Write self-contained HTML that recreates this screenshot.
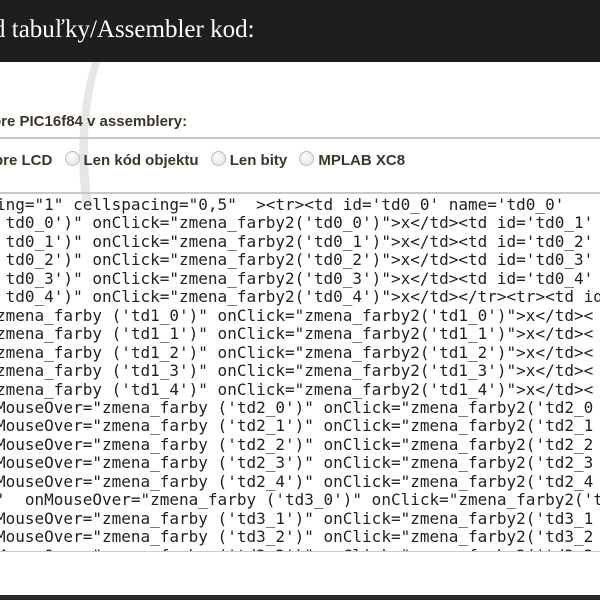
<!DOCTYPE html>
<html><head><meta charset="utf-8"><style>
html,body{margin:0;padding:0;width:600px;height:600px;overflow:hidden;background:#fff;position:relative}
.hdr{position:absolute;left:0;top:0;width:600px;height:62px;background:#1e1e1e}
.hdr span{position:absolute;left:-7px;top:16px;font:25px "Liberation Serif",serif;color:#fff;white-space:nowrap}
.lbl{position:absolute;left:-8px;top:113px;font:bold 15px "Liberation Sans",sans-serif;color:#3d3528;white-space:nowrap}
.hr1{position:absolute;left:0;top:137px;width:600px;height:2px;background:#c8c8c8}
.radios{position:absolute;left:-6px;top:151px;font:bold 15px "Liberation Sans",sans-serif;color:#3d3528;white-space:nowrap}
.r{display:inline-block;width:13px;height:13px;border-radius:50%;border:1px solid #bbb;background:radial-gradient(circle at 40% 35%,#fff,#ddd);vertical-align:-1px;margin:0 4px 0 8px}
.hr2{position:absolute;left:0;top:192px;width:600px;height:2px;background:#c8c8c8}
.code{position:absolute;left:0;top:195px;width:600px;height:356px;overflow:hidden;border-bottom:1px solid #ccc}
pre{position:absolute;left:-4px;top:1px;margin:0;font:16px "DejaVu Sans Mono",monospace;line-height:18.45px;color:#222;white-space:pre}
.foot{position:absolute;left:0;top:595px;width:600px;height:5px;background:#2a2a2a}
</style></head><body>
<svg style="position:absolute;left:0;top:62px" width="200" height="140"><path d="M100 0 C88 40 84 90 92 140 L82 140 C76 90 80 40 92 0 Z" fill="#e6e6e6"/></svg>
<div class="hdr"><span>d tabuľky/Assembler kod:</span></div>
<div class="lbl">pre PIC16f84 v assemblery:</div>
<div class="hr1"></div>
<div class="radios">pre LCD <span class="r"></span>Len kód objektu <span class="r"></span>Len bity <span class="r"></span>MPLAB XC8</div>
<div class="hr2"></div>
<div class="code"><pre>ing="1" cellspacing="0,5"  &gt;&lt;tr&gt;&lt;td id='td0_0' name='td0_0'
 td0_0')" onClick="zmena_farby2('td0_0')"&gt;x&lt;/td&gt;&lt;td id='td0_1'
 td0_1')" onClick="zmena_farby2('td0_1')"&gt;x&lt;/td&gt;&lt;td id='td0_2'
 td0_2')" onClick="zmena_farby2('td0_2')"&gt;x&lt;/td&gt;&lt;td id='td0_3'
 td0_3')" onClick="zmena_farby2('td0_3')"&gt;x&lt;/td&gt;&lt;td id='td0_4'
 td0_4')" onClick="zmena_farby2('td0_4')"&gt;x&lt;/td&gt;&lt;/tr&gt;&lt;tr&gt;&lt;td id
zmena_farby ('td1_0')" onClick="zmena_farby2('td1_0')"&gt;x&lt;/td&gt;&lt;
zmena_farby ('td1_1')" onClick="zmena_farby2('td1_1')"&gt;x&lt;/td&gt;&lt;
zmena_farby ('td1_2')" onClick="zmena_farby2('td1_2')"&gt;x&lt;/td&gt;&lt;
zmena_farby ('td1_3')" onClick="zmena_farby2('td1_3')"&gt;x&lt;/td&gt;&lt;
zmena_farby ('td1_4')" onClick="zmena_farby2('td1_4')"&gt;x&lt;/td&gt;&lt;
MouseOver="zmena_farby ('td2_0')" onClick="zmena_farby2('td2_0
MouseOver="zmena_farby ('td2_1')" onClick="zmena_farby2('td2_1
MouseOver="zmena_farby ('td2_2')" onClick="zmena_farby2('td2_2
MouseOver="zmena_farby ('td2_3')" onClick="zmena_farby2('td2_3
MouseOver="zmena_farby ('td2_4')" onClick="zmena_farby2('td2_4
'  onMouseOver="zmena_farby ('td3_0')" onClick="zmena_farby2('t
MouseOver="zmena_farby ('td3_1')" onClick="zmena_farby2('td3_1
MouseOver="zmena_farby ('td3_2')" onClick="zmena_farby2('td3_2
MouseOver="zmena_farby ('td3_3')" onClick="zmena_farby2('td3_3</pre></div>
<div class="foot"></div>
</body></html>
